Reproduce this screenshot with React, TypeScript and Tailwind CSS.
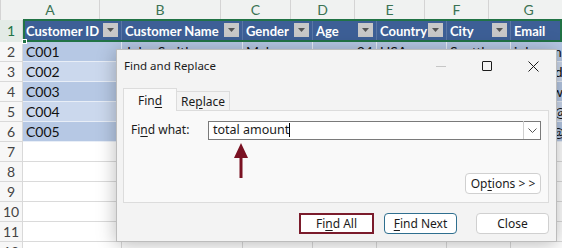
import React from 'react';

const colW = ['w-[99px]', 'w-[121px]', 'w-[70px]', 'w-[64px]', 'w-[70px]', 'w-[64px]', 'w-[80px]'];
const letters = ['A', 'B', 'C', 'D', 'E', 'F', 'G'];
const headers = ['Customer ID', 'Customer Name', 'Gender', 'Age', 'Country', 'City', 'Email'];

const rows = [
  ['C001', 'John Smith', 'Male', '34', 'USA', 'Seattle', 'john.smith@mail.com'],
  ['C002', 'Emma Davis', 'Female', '28', 'UK', 'London', 'emma.d@mail.com'],
  ['C003', 'Liam Brown', 'Male', '41', 'Canada', 'Toronto', 'liambrw@mail.com'],
  ['C004', 'Olivia Chen', 'Female', '25', 'USA', 'Boston', 'olivia.r@mail.com'],
  ['C005', 'Noah Patel', 'Male', '37', 'India', 'Mumbai', 'noahp@mail.com'],
];

function FilterBtn() {
  return (
    <span className="absolute right-[3px] top-[3px] w-[15px] h-[14px] bg-[#c8c8c8] flex items-center justify-center">
      <svg width="7" height="4" viewBox="0 0 7 4"><path d="M0 0h7L3.5 4z" fill="#555" /></svg>
    </span>
  );
}

function Sheet() {
  return (
    <div className="text-[14px] leading-none text-[#111]">
      {/* column letters */}
      <div className="flex h-[20px] bg-[#f0f2f1]">
        <div className="w-[23px] h-full relative border-r border-[#d4d4d4]">
          <svg className="absolute right-[2px] bottom-[2px]" width="11" height="11" viewBox="0 0 11 11"><path d="M11 0v11H0z" fill="#dadada" /></svg>
        </div>
        {letters.map((l, i) => (
          <div key={l} className={`${colW[i]} shrink-0 h-full flex items-center justify-center border-r border-[#d4d4d4] text-[#3b7253]`}>{l}</div>
        ))}
      </div>
      {/* row 1 header */}
      <div className="flex h-[22px]">
        <div className="w-[23px] shrink-0 flex items-center justify-center bg-[#e3ebe6] text-[#217346] border-r border-[#d4d4d4]">1</div>
        {headers.map((h, i) => (
          <div key={h} className={`${colW[i]} shrink-0 relative flex items-center pl-[3px] bg-[#3d5f96] text-white text-[13px] font-bold border-r border-[#5a77a6] overflow-hidden whitespace-nowrap`}>
            {h}
            <FilterBtn />
          </div>
        ))}
      </div>
      {rows.map((r, ri) => (
        <div key={ri} className="flex h-[20px]">
          <div className="w-[23px] shrink-0 flex items-center justify-center bg-[#f7f7f7] text-[#444] border-r border-b border-[#d9d9d9]">{ri + 2}</div>
          {r.map((c, ci) => (
            <div
              key={ci}
              className={`${colW[ci]} shrink-0 flex items-center px-[3px] overflow-hidden whitespace-nowrap border-r border-b border-[#e8eef7] ${ri % 2 === 0 ? 'bg-[#b6c8e4]' : 'bg-[#cbd8ed]'} ${ci === 3 ? 'justify-end' : ''}`}
            >
              {c}
            </div>
          ))}
        </div>
      ))}
      {[7, 8, 9, 10, 11, 12].map(n => (
        <div key={n} className="flex h-[20px]">
          <div className="w-[23px] shrink-0 flex items-center justify-center bg-[#f7f7f7] text-[#444] border-r border-b border-[#d9d9d9]">{n}</div>
          {colW.map((w, ci) => (
            <div key={ci} className={`${w} shrink-0 border-r border-b border-[#dadada] bg-white`} />
          ))}
        </div>
      ))}
    </div>
  );
}

function Dialog() {
  return (
    <div className="absolute left-[116px] top-[49px] w-[441px] h-[193px] bg-[#f3f3f3] border border-[#bcbcbc] shadow-[0_2px_18px_rgba(0,0,0,0.28)] flex flex-col font-['Noto_Sans',sans-serif] text-[12px] leading-none text-[#1b1b1b]">
      {/* title bar */}
      <div className="h-[32px] flex items-center shrink-0">
        <span className="pl-[7px] text-[11.5px]">Find and Replace</span>
        <div className="ml-auto flex h-full">
          <div className="w-[46px] h-full flex items-center justify-center">
            <span className="w-[10px] h-px bg-[#c6c6c6]" />
          </div>
          <div className="w-[46px] h-full flex items-center justify-center">
            <span className="w-[10px] h-[10px] border border-[#1b1b1b] rounded-[1px]" />
          </div>
          <div className="w-[46px] h-full flex items-center justify-center">
            <svg width="11" height="11" viewBox="0 0 11 11"><path d="M0.5 0.5l10 10M10.5 0.5l-10 10" stroke="#1b1b1b" strokeWidth="1" /></svg>
          </div>
        </div>
      </div>
      {/* tabs */}
      <div className="flex items-end mt-[7px] ml-[6px] h-[22px] relative z-10 -mb-px">
        <div className="w-[54px] h-[23px] bg-[#f9f9f9] border border-b-0 border-[#dcdcdc] flex items-center justify-center pt-[1px]">
          Fin<u className="underline-offset-2">d</u>
        </div>
        <div className="w-[53px] h-[20px] border-t border-r border-[#dcdcdc] flex items-center justify-center">
          Re<u className="underline-offset-2">p</u>lace
        </div>
      </div>
      {/* panel */}
      <div className="ml-[6px] w-[426px] h-[93px] border border-[#dcdcdc] bg-[#f9f9f9] relative shrink-0">
        <div className="flex items-center mt-[10px] h-[18px]">
          <span className="w-[84px] pl-[7px]">Fi<u className="underline-offset-2">n</u>d what:</span>
          <div className="w-[333px] h-[19px] bg-white border border-[#7a7a7a] flex items-center">
            <span className="pl-[4px] text-[12.5px]">total amount</span>
            <span className="w-px h-[14px] bg-black" />
            <div className="ml-auto h-[18px] w-[17px] border-l border-[#cfcfcf] flex items-center justify-center">
              <svg width="9" height="5" viewBox="0 0 9 5"><path d="M0.5 0.5l4 4 4-4" fill="none" stroke="#555" strokeWidth="1" /></svg>
            </div>
          </div>
        </div>
        <svg className="absolute left-[109px] top-[32px]" width="16" height="36" viewBox="0 0 16 36">
          <path d="M8 0L15 15H1z" fill="#7a1223" />
          <rect x="6.5" y="14" width="3" height="21" fill="#7a1223" />
        </svg>
        <div className="flex justify-end pr-[7px] mt-[34px]">
          <button className="w-[76px] h-[21px] bg-white border border-[#d0d0d0] rounded-[4px] flex items-center justify-center">
            Op<u className="underline-offset-2">t</u>ions &gt; &gt;
          </button>
        </div>
      </div>
      {/* bottom buttons */}
      <div className="flex justify-end pr-[7px] mt-[10px]">
        <button className="w-[75px] h-[21px] bg-white border-2 border-[#7b1c2c] flex items-center justify-center mr-[10px]">
          Fi<u className="underline-offset-2">n</u>d All
        </button>
        <button className="w-[73px] h-[21px] bg-white border border-[#2f6f8f] rounded-[4px] flex items-center justify-center mr-[19px]">
          <u className="underline-offset-2">F</u>ind Next
        </button>
        <button className="w-[73px] h-[21px] bg-white border border-[#d0d0d0] rounded-[4px] flex items-center justify-center">
          Close
        </button>
      </div>
    </div>
  );
}

export default function App() {
  return (
    <div className="relative w-[562px] h-[248px] overflow-hidden bg-white font-['Lato',sans-serif]">
      <Sheet />
      {/* row 1 selection */}
      <div className="absolute left-[23px] top-[19px] right-0 h-[23px] border-2 border-[#217346] pointer-events-none" />
      <div className="absolute left-[22px] top-[39px] w-[5px] h-[5px] bg-[#217346] border border-white" />
      <Dialog />
    </div>
  );
}
